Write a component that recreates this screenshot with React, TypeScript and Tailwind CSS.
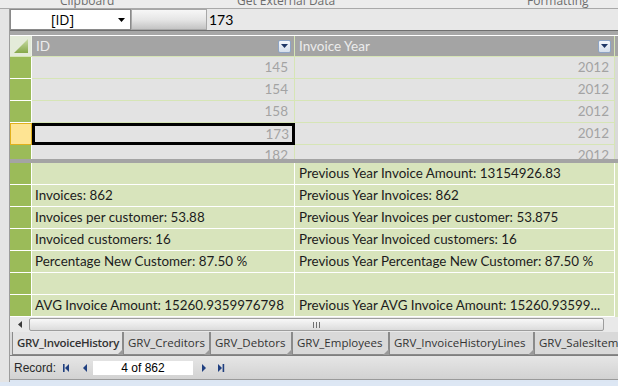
const dataRows = [
  { id: 145, year: 2012 },
  { id: 154, year: 2012 },
  { id: 158, year: 2012 },
  { id: 173, year: 2012, current: true },
  { id: 182, year: 2012 },
]

const formRows = [
  { left: '', right: 'Previous Year Invoice Amount: 13154926.83' },
  { left: 'Invoices: 862', right: 'Previous Year Invoices: 862' },
  { left: 'Invoices per customer: 53.88', right: 'Previous Year Invoices per customer: 53.875' },
  { left: 'Invoiced customers: 16', right: 'Previous Year Invoiced customers: 16' },
  { left: 'Percentage New Customer: 87.50 %', right: 'Previous Year Percentage New Customer: 87.50 %' },
  { left: '', right: '' },
  { left: 'AVG Invoice Amount: 15260.9359976798', right: 'Previous Year AVG Invoice Amount: 15260.93599...' },
]

const tabs = [
  { name: 'GRV_InvoiceHistory', w: 'w-[111px]', active: true },
  { name: 'GRV_Creditors', w: 'w-[87px]' },
  { name: 'GRV_Debtors', w: 'w-[82px]' },
  { name: 'GRV_Employees', w: 'w-[97px]' },
  { name: 'GRV_InvoiceHistoryLines', w: 'w-[145px]' },
  { name: 'GRV_SalesItems', w: 'w-[100px]' },
]

function HeaderArrow() {
  return (
    <div className="w-[13px] h-[13px] rounded-[2px] border border-[#8ea4c4] bg-gradient-to-b from-[#f4f7fb] to-[#d5deea] flex items-center justify-center">
      <svg width="7" height="4" viewBox="0 0 7 4">
        <path d="M0 0h7L3.5 4z" fill="#1f3766" />
      </svg>
    </div>
  )
}

function NavIcon({ kind }: { kind: 'first' | 'prev' | 'next' | 'last' }) {
  const paths = {
    first: <><rect x="0" y="0" width="1.6" height="8" /><path d="M6 0v8L2 4z" /></>,
    prev: <path d="M5 0v8L1 4z" />,
    next: <path d="M1 0v8l4-4z" />,
    last: <><path d="M0 0v8l4-4z" /><rect x="4.6" y="0" width="1.6" height="8" /></>,
  }
  return (
    <svg width="7" height="8" viewBox="0 0 7 8" fill="#1f3f80">
      {paths[kind]}
    </svg>
  )
}

export default function App() {
  return (
    <div className="w-[618px] h-[386px] overflow-hidden bg-[#dce6f3] flex flex-col font-['Lato',sans-serif]">
      {/* ribbon group captions, cut at the top */}
      <div className="h-[9px] shrink-0 bg-[#ececec] border-b border-[#a9a9a9] overflow-hidden">
        <div className="flex text-[12px] leading-[12px] text-[#6c6c6c] -mt-[5px] font-['Open_Sans',sans-serif]">
          <span className="ml-[60px] w-[177px]">Clipboard</span>
          <span className="w-[290px]">Get External Data</span>
          <span>Formatting</span>
        </div>
      </div>

      <div className="flex flex-1 min-h-0">
        <div className="w-[10px] shrink-0 bg-[#e4e4e4] border-r border-[#9c9c9c]" />

        <div className="flex-1 flex flex-col min-w-0">
          {/* filter bar */}
          <div className="h-[22px] shrink-0 bg-[#e8e8e8] border-b border-[#6f6f6f] flex items-stretch">
            <div className="w-[121px] bg-white border border-[#8a8a8a] flex items-center relative">
              <span className="flex-1 text-center text-[14px] text-black font-['Open_Sans',sans-serif] pr-[16px]">[ID]</span>
              <svg className="absolute right-[5px] top-[8px]" width="7" height="4" viewBox="0 0 7 4">
                <path d="M0 0h7L3.5 4z" fill="#000" />
              </svg>
            </div>
            <div className="w-[76px] border border-[#a8a8a8] bg-gradient-to-b from-[#f7f7f7] via-[#e6e6e6] to-[#c4c4c4]" />
            <span className="pl-[2px] text-[14px] text-black self-center">173</span>
          </div>
          <div className="h-[4px] shrink-0 bg-[#a7a7a7]" />

          {/* datasheet */}
          <div className="h-[124px] shrink-0 overflow-hidden bg-[#d9d9d9] border-t border-white">
            <div className="flex h-[21px] border-b border-[#d6e5b6] bg-[#a4a4a4]">
              <div className="w-[22px] shrink-0 bg-[#e4ebd9] border-r border-[#eef3e6] flex items-end justify-end p-[3px]">
                <svg width="14" height="14" viewBox="0 0 14 14">
                  <defs>
                    <linearGradient id="tri" x1="0" y1="0" x2="0" y2="1">
                      <stop offset="0" stopColor="#c9dca6" />
                      <stop offset="1" stopColor="#86a84a" />
                    </linearGradient>
                  </defs>
                  <path d="M0 14L14 0v14z" fill="url(#tri)" />
                </svg>
              </div>
              <div className="w-[263px] shrink-0 border-r border-[#d6e5b6] flex items-center justify-between pl-[4px] pr-[3px]">
                <span className="text-[13.5px] text-[#ececec]">ID</span>
                <HeaderArrow />
              </div>
              <div className="w-[320px] shrink-0 border-r border-[#d6e5b6] flex items-center justify-between pl-[4px] pr-[3px]">
                <span className="text-[13.5px] text-[#ececec]">Invoice Year</span>
                <HeaderArrow />
              </div>
            </div>
            {dataRows.map((r) => (
              <div key={r.id} className="flex h-[22px]">
                <div
                  className={
                    r.current
                      ? 'w-[22px] shrink-0 bg-[#fee493] border border-[#e2b11c]'
                      : 'w-[22px] shrink-0 bg-[#9bbb59] border-b border-r border-white'
                  }
                />
                <div
                  className={
                    r.current
                      ? 'w-[263px] shrink-0 bg-[#e3e3e3] border-[3px] border-black flex items-center justify-end pr-[3px]'
                      : 'w-[263px] shrink-0 bg-[#e3e3e3] border-b border-r border-[#d6e5b6] flex items-center justify-end pr-[6px]'
                  }
                >
                  <span className="text-[13.5px] text-[#a3a3a3]">{r.id}</span>
                </div>
                <div className="w-[320px] shrink-0 bg-[#e3e3e3] border-b border-r border-[#d6e5b6] flex items-center justify-end pr-[5px]">
                  <span className="text-[13.5px] text-[#a3a3a3]">{r.year}</span>
                </div>
              </div>
            ))}
          </div>
          <div className="h-[4px] shrink-0 bg-[#a4a4a4]" />

          {/* form section */}
          <div className="shrink-0 bg-[#d8e4bc]">
            {formRows.map((r, i) => (
              <div key={i} className="flex h-[22px]">
                <div className="w-[22px] shrink-0 bg-[#9bbb59] border-b border-r border-white" />
                <div className="w-[263px] shrink-0 border-b border-r border-white flex items-center pl-[3px]">
                  <span className="text-[13.4px] text-[#1c1c1c] whitespace-nowrap">{r.left}</span>
                </div>
                <div className="w-[320px] shrink-0 border-b border-r border-white flex items-center pl-[4px] overflow-hidden">
                  <span className="text-[13.4px] text-[#1c1c1c] whitespace-nowrap">{r.right}</span>
                </div>
              </div>
            ))}
          </div>

          {/* horizontal scrollbar */}
          <div className="h-[15px] shrink-0 bg-[#e9e9e9] flex items-stretch py-[1px]">
            <div className="w-[19px] flex items-center justify-center">
              <svg width="4" height="7" viewBox="0 0 4 7">
                <path d="M4 0v7L0 3.5z" fill="#3a3a3a" />
              </svg>
            </div>
            <div className="w-[575px] rounded-[2px] border border-[#9d9d9d] bg-gradient-to-b from-[#f8f8f8] to-[#dcdcdc] flex items-center justify-center gap-[2px]">
              <span className="w-[1px] h-[6px] bg-[#6f6f6f]" />
              <span className="w-[1px] h-[6px] bg-[#6f6f6f]" />
              <span className="w-[1px] h-[6px] bg-[#6f6f6f]" />
            </div>
          </div>

          {/* object tabs */}
          <div className="h-[24px] shrink-0 bg-[#dadada] flex pl-[2px] border-b border-[#7f7f7f] overflow-hidden">
            {tabs.map((t) => (
              <div
                key={t.name}
                className={
                  'relative shrink-0 h-[23px] border-l border-r border-b border-[#8a8a8a] flex items-center pl-[4px] whitespace-nowrap text-[11.5px] text-[#333] font-["Open_Sans",sans-serif] ' +
                  t.w +
                  (t.active ? ' bg-[#e4e4e4] font-semibold tracking-[-0.3px]' : ' bg-[#d9d9d9]')
                }
              >
                {t.name}
                <svg className="absolute right-[-1px] bottom-[-1px]" width="6" height="6" viewBox="0 0 6 6">
                  <path d="M6 0v6H0z" fill="#9a9a9a" />
                </svg>
              </div>
            ))}
          </div>

          {/* record navigator */}
          <div className="h-[24px] shrink-0 bg-gradient-to-b from-[#e6e6e6] to-[#d2d2d2] border-b border-[#9a9a9a] flex items-center font-['Liberation_Sans',sans-serif] text-[12px] text-[#2a2a2a]">
            <span className="ml-[4px] w-[49px]">Record:</span>
            <NavIcon kind="first" />
            <span className="w-[12px]" />
            <NavIcon kind="prev" />
            <div className="ml-[4px] w-[100px] h-[14px] bg-white flex items-center justify-center text-black">4 of 862</div>
            <span className="w-[8px]" />
            <NavIcon kind="next" />
            <span className="w-[10px]" />
            <NavIcon kind="last" />
          </div>
        </div>
      </div>

      <div className="h-[4px] shrink-0 bg-[#dde7f4]" />
    </div>
  )
}
